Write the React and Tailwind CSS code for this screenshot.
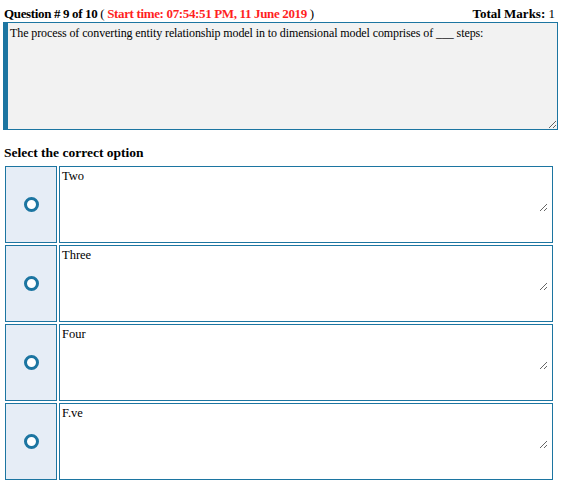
import React from "react";

const options = ["Two", "Three", "Four", "F.ve"];

function Radio() {
  return (
    <span className="block w-[15px] h-[15px] rounded-full border-[3px] border-[#1c75a1] bg-white" />
  );
}

export default function App() {
  return (
    <div className="w-[563px] h-[487px] bg-white text-black font-['Liberation_Serif',serif] text-[13px]">
      <div className="flex items-end justify-between px-[4px] pt-[3px] h-[20px] leading-none">
        <div className="font-bold tracking-[-0.35px]">
          Question # 9 of 10 <span className="font-normal">(</span>{" "}
          <span className="text-[#ff1f1f]">Start time: 07:54:51 PM, 11 June 2019</span>{" "}
          <span className="font-normal">)</span>
        </div>
        <div className="font-bold mr-[4px]">
          Total Marks: <span className="font-normal">1</span>
        </div>
      </div>

      <div className="ml-[3px] mt-[2px] w-[555px]">
        <textarea
          readOnly
          defaultValue="The process of converting entity relationship model in to dimensional model comprises of ___ steps:"
          className="block w-[555px] h-[108px] bg-[#f2f2f2] border border-[#1c75a1] border-l-[5px] px-[2px] py-[3px] text-[12px] tracking-[-0.1px] leading-[15px] font-['Liberation_Serif',serif] outline-none"
        />
      </div>

      <div className="font-bold px-[4px] mt-[15px] leading-[16px] text-[13.5px]">Select the correct option</div>

      <div className="flex flex-col gap-[2px] ml-[5px] mt-[5px] w-[548px]">
        {options.map((opt) => (
          <div key={opt} className="flex gap-[2px] h-[77px]">
            <div className="w-[52px] shrink-0 bg-[#e6edf6] border border-[#1c75a1] flex items-center justify-center">
              <Radio />
            </div>
            <div className="flex-1 border border-[#1c75a1] bg-white pl-[1px] pr-[4px]">
              <textarea
                readOnly
                defaultValue={opt}
                className="block w-full h-[45px] bg-white border-0 px-[1px] pt-[2px] text-[12.5px] leading-[15px] font-['Liberation_Serif',serif] outline-none"
              />
            </div>
          </div>
        ))}
      </div>
    </div>
  );
}
